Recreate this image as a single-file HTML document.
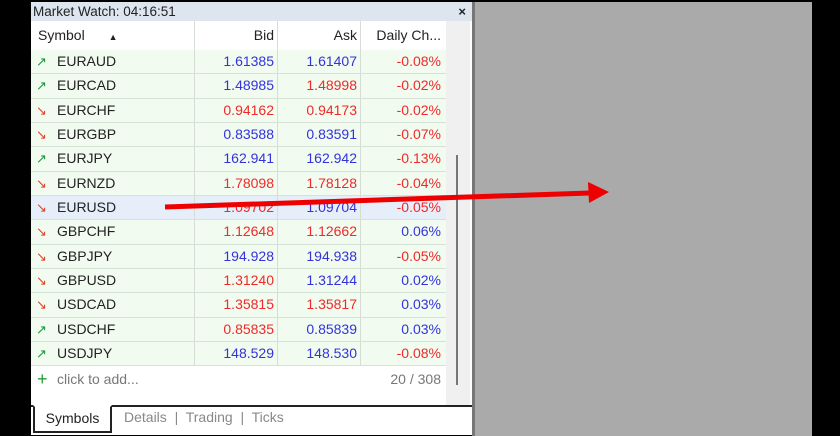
<!DOCTYPE html>
<html><head><meta charset="utf-8"><style>
*{margin:0;padding:0;box-sizing:border-box}
body{width:840px;height:436px;background:#000;position:relative;overflow:hidden;font-family:"Liberation Sans",sans-serif;font-size:14px;color:#222}
.panel{position:absolute;left:31px;top:2px;width:441px;height:433px;background:#fff}
.title{position:absolute;left:0;top:0;width:441px;height:19px;background:#dde5ef;font-size:13.5px;line-height:19px;padding-left:2px;color:#222}
.x{position:absolute;right:6px;top:0;font-weight:bold;font-size:13px}
.hdr{position:absolute;left:0;top:19px;width:415px;height:29px;background:#fff;line-height:29px}
.sb{position:absolute;left:415px;top:19px;width:24px;height:384px;background:#f0f0f0}
.sb i{position:absolute;left:10px;top:134px;width:2px;height:230px;background:#777}
.row{position:absolute;left:0;width:415px;height:24.3px;line-height:23px;background:#f1fbef;border-bottom:1px solid #d6e2d6}
.c{position:absolute;top:0;height:100%;border-right:1px solid #d6dcd6}
.s{left:0;width:164px;padding-left:26px}
.b{left:164px;width:83px;text-align:right;padding-right:3px}
.a{left:247px;width:83px;text-align:right;padding-right:3px}
.d{left:330px;width:85px;text-align:right;padding-right:5px;border-right:none}
.ar{position:absolute;left:5px;top:0;font-size:13px}
.up{color:#1a9a3a}.dn{color:#e0402a}
.bl{color:#3333dd}.rd{color:#ee2a2a}
.tabs{position:absolute;left:0;top:403px;width:441px;height:30px;border-top:2px solid #222;font-size:14px;color:#888}
.tab{position:absolute;left:2px;top:-2px;width:79px;height:28px;border:2px solid #222;border-top:2px solid #fff;background:#fff;color:#222;text-align:center;line-height:22px}
.gray{position:absolute;left:472px;top:2px;width:340px;height:434px;background:#aaa;border-left:3px solid #777}
</style></head><body>
<div class="panel">
<div class="title">Market Watch: 04:16:51<span class="x">×</span></div>
<div class="hdr">
<div class="c s" style="padding-left:7px">Symbol <span style="font-size:9px;margin-left:20px">▲</span></div>
<div class="c b">Bid</div><div class="c a">Ask</div><div class="c d">Daily Ch...</div>
</div>
<div class="sb"><i></i></div>
<div id="rows"></div>
<div style="position:absolute;left:6px;top:366px;color:#2a9a3a;font-size:18px;line-height:22px">+</div>
<div style="position:absolute;left:26px;top:366px;line-height:22px;color:#777">click to add...</div>
<div style="position:absolute;left:330px;width:80px;text-align:right;top:366px;line-height:22px;color:#777">20 / 308</div>
<div class="tabs"><div class="tab">Symbols</div>
<span style="position:absolute;left:93px;top:2px">Details &nbsp;|&nbsp; Trading &nbsp;|&nbsp; Ticks</span></div>
</div>
<div class="gray"></div>
<svg style="position:absolute;left:0;top:0" width="840" height="436">
<line x1="165" y1="207" x2="590" y2="193" stroke="#e00" stroke-width="5"/>
<polygon points="588,182 609,192 589,203" fill="#e00"/>
</svg>
<script>
var d=[["u","EURAUD","1.61385","b","1.61407","b","-0.08%","r"],
["u","EURCAD","1.48985","b","1.48998","r","-0.02%","r"],
["d","EURCHF","0.94162","r","0.94173","r","-0.02%","r"],
["d","EURGBP","0.83588","b","0.83591","b","-0.07%","r"],
["u","EURJPY","162.941","b","162.942","b","-0.13%","r"],
["d","EURNZD","1.78098","r","1.78128","r","-0.04%","r"],
["d","EURUSD","1.09702","r","1.09704","b","-0.05%","r"],
["d","GBPCHF","1.12648","r","1.12662","r","0.06%","b"],
["d","GBPJPY","194.928","b","194.938","b","-0.05%","r"],
["d","GBPUSD","1.31240","r","1.31244","b","0.02%","b"],
["d","USDCAD","1.35815","r","1.35817","r","0.03%","b"],
["u","USDCHF","0.85835","r","0.85839","b","0.03%","b"],
["u","USDJPY","148.529","b","148.530","b","-0.08%","r"]];
var h="";d.forEach(function(r,i){var t=48+i*24.33;var bg=i==6?"background:#e6eefa;":"";
h+='<div class="row" style="top:'+t+'px;'+bg+'"><div class="c s"><span class="ar '+(r[0]=="u"?"up":"dn")+'">'+(r[0]=="u"?"↗":"↘")+'</span>'+r[1]+'</div><div class="c b '+(r[3]=="b"?"bl":"rd")+'">'+r[2]+'</div><div class="c a '+(r[5]=="b"?"bl":"rd")+'">'+r[4]+'</div><div class="c d '+(r[7]=="b"?"bl":"rd")+'">'+r[6]+'</div></div>';});
document.getElementById("rows").innerHTML=h;
</script>
</body></html>
